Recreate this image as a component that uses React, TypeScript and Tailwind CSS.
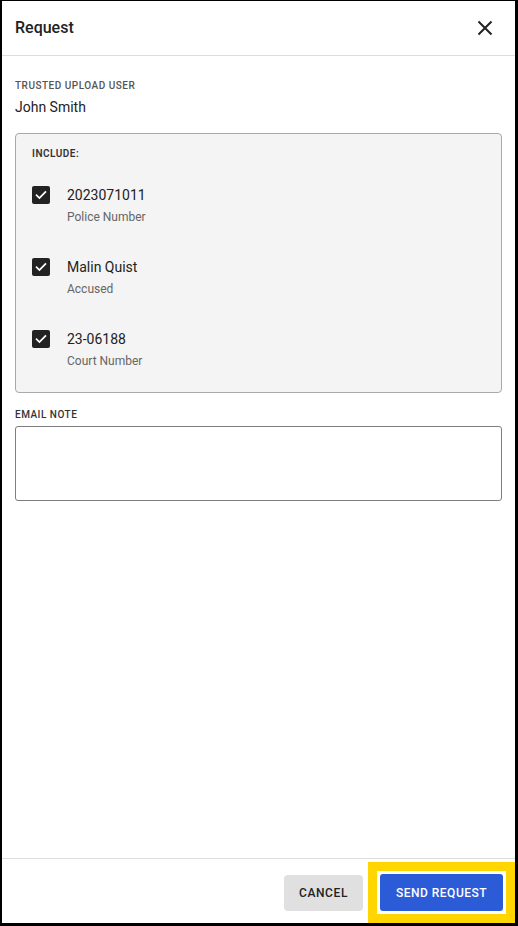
import React from "react";

const items = [
  { title: "2023071011", sub: "Police Number" },
  { title: "Malin Quist", sub: "Accused" },
  { title: "23-06188", sub: "Court Number" },
];

function Check() {
  return (
    <div className="mt-[1px] flex h-[18px] w-[18px] shrink-0 items-center justify-center rounded-[2px] bg-[#222222]">
      <svg width="14" height="14" viewBox="0 0 24 24" fill="none">
        <path d="M4.5 12.5l4.8 4.8L19.5 7" stroke="#ffffff" strokeWidth="3" strokeLinecap="square" strokeLinejoin="miter" />
      </svg>
    </div>
  );
}

export default function App() {
  return (
    <div className="h-[926px] w-[518px] bg-black pl-[2px] pt-[1px] pr-[3px] pb-[3px]" style={{ fontFamily: "Roboto, 'Liberation Sans', sans-serif" }}>
      <div className="flex h-full w-full flex-col bg-white">
        <div className="flex h-[55px] shrink-0 items-center justify-between border-b border-[#dddddd] pl-[13px] pr-[22px]">
          <span className="text-[16px] font-medium text-[#222222]">Request</span>
          <svg width="16" height="16" viewBox="0 0 16 16" fill="none">
            <path d="M1.5 1.5L14.5 14.5M14.5 1.5L1.5 14.5" stroke="#222222" strokeWidth="2" />
          </svg>
        </div>
        <div className="flex flex-1 flex-col px-[13px] pt-[24px]">
          <div className="text-[10px] font-medium leading-[12px] tracking-[0.5px] text-[#555555]">TRUSTED UPLOAD USER</div>
          <div className="mt-[5px] text-[14px] leading-[20px] text-[#222222]">John Smith</div>
          <div className="mt-[16px] rounded-[4px] border border-[#a9a9a9] bg-[#f4f4f4] pb-[23px] pl-[16px] pt-[14px]">
            <div className="text-[10px] font-semibold leading-[12px] tracking-[0.5px] text-[#333333]">INCLUDE:</div>
            <div className="mt-[25px] flex flex-col gap-[32px]">
              {items.map((it) => (
                <div key={it.title} className="flex gap-[17px]">
                  <Check />
                  <div className="flex flex-col">
                    <span className="text-[14px] leading-[20px] text-[#222222]">{it.title}</span>
                    <span className="mt-[4px] text-[12px] leading-[16px] text-[#666666]">{it.sub}</span>
                  </div>
                </div>
              ))}
            </div>
          </div>
          <div className="mt-[16px] text-[10px] font-medium leading-[12px] tracking-[0.5px] text-[#333333]">EMAIL NOTE</div>
          <textarea className="mt-[5px] h-[75px] w-full resize-none rounded-[3px] border border-[#7d7d7d] bg-white p-2 text-[14px] outline-none" />
        </div>
        <div className="flex h-[65px] shrink-0 items-end justify-end border-t border-[#dddddd]">
          <button className="mb-[12px] mr-[5px] flex h-[36px] w-[79px] items-center justify-center rounded-[4px] bg-[#e0e0e0] text-[12px] font-medium tracking-[0.6px] text-[#222222]">
            CANCEL
          </button>
          <div className="bg-[#ffd600] p-[9px]">
            <div className="bg-white p-[3px]">
              <button className="flex h-[37px] w-[123px] items-center justify-center rounded-[3px] bg-[#2b5bd6] text-[12px] font-medium tracking-[0.5px] text-white">
                SEND REQUEST
              </button>
            </div>
          </div>
        </div>
      </div>
    </div>
  );
}
